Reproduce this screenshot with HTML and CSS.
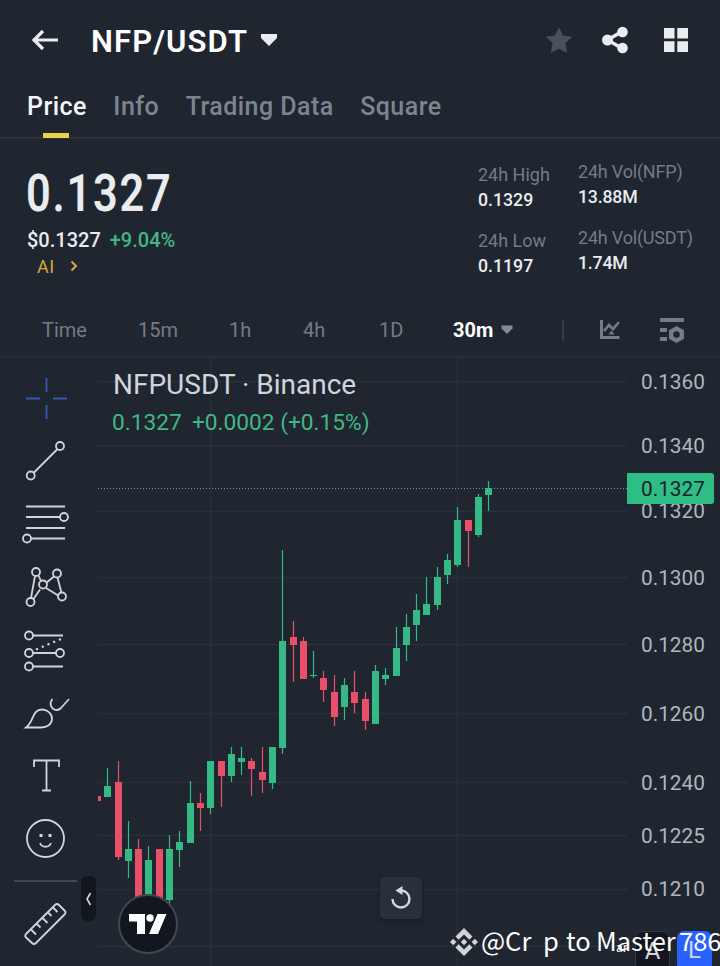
FILE: index.html
```html
<!DOCTYPE html>
<html lang="en">
<head>
<meta charset="utf-8">
<title>NFP/USDT</title>
<link rel="stylesheet" href="styles.css">
</head>
<body>
<div class="app">
  <header class="topbar">
    <svg class="back" width="28" height="22" viewBox="0 0 28 22"><path d="M27 11H3M12 2L3 11l9 9" fill="none" stroke="#eaecef" stroke-width="3.2"/></svg>
    <h1 class="pair">NFP/USDT</h1>
    <svg class="caret" width="18" height="14" viewBox="0 0 18 14"><path d="M1 1h16v4L9 13 1 5z" fill="#eaecef"/></svg>
    <div class="actions">
      <svg width="28" height="28" viewBox="0 0 28 28"><path d="M14 1l4 8.6 9.2 1.1-6.8 6.5 1.9 9.8L14 22.8 5.700 27l1.900-9.800L.8 10.700 10 9.600z" fill="#4a4f5b"/></svg>
      <svg width="28" height="28" viewBox="0 0 28 28"><path d="M21 5.500L6.500 14 21 22.300" fill="none" stroke="#eaecef" stroke-width="3.500"/><circle cx="6.500" cy="14" r="5.500" fill="#eaecef"/><circle cx="21.500" cy="6" r="5.300" fill="#eaecef"/><circle cx="21.500" cy="22" r="5.300" fill="#eaecef"/></svg>
      <svg width="26" height="26" viewBox="0 0 26 26" fill="#eaecef"><path d="M1 1h10.500v10.500H1zM14.300 1h10.700v10.500H14.300zM1 14.300h10.500V25H1zM14.300 14.300h10.700V25H14.300z"/></svg>
    </div>
  </header>

  <nav class="tabs">
    <a class="tab active">Price</a>
    <a class="tab info">Info</a>
    <a class="tab trading">Trading Data</a>
    <a class="tab square">Square</a>
  </nav>

  <section class="summary">
    <div class="quote">
      <div class="last"><span class="fit">0.1327</span></div>
      <div class="sub"><span class="fiat">$0.1327</span><span class="change">+9.04%</span></div>
      <div class="ai"><span>AI</span><svg width="8" height="12" viewBox="0 0 8 12"><path d="M1.500 1.500L6 6l-4.500 4.500" fill="none" stroke="#d9a83c" stroke-width="2"/></svg></div>
    </div>
    <dl class="stats range">
      <dt>24h High</dt><dd>0.1329</dd>
      <dt>24h Low</dt><dd>0.1197</dd>
    </dl>
    <dl class="stats volume">
      <dt>24h Vol(NFP)</dt><dd>13.88M</dd>
      <dt>24h Vol(USDT)</dt><dd>1.74M</dd>
    </dl>
  </section>

  <nav class="frames">
    <span>Time</span><span>15m</span><span>1h</span><span>4h</span><span>1D</span>
    <span class="current">30m <svg width="12" height="10" viewBox="0 0 12 10"><path d="M.5.500h11v3L6 9 .5 3.500z" fill="#848a95"/></svg></span>
    <i class="rule"></i>
    <svg width="22" height="22" viewBox="0 0 22 22" fill="none" stroke="#767d88" stroke-width="3"><path d="M2.500 1v17.500H20.500"/><path d="M5 12l5-6 4 4 6-7" stroke-width="2.600"/><path d="M9.500 15.500l3-4 3 4z" fill="#767d88" stroke="none"/></svg>
    <svg class="settings" width="28" height="28" viewBox="0 0 28 28" fill="#767d88"><path d="M2 2h24v4H2zM2 12h7v4H2zM2 21h7v4H2z"/><path fill-rule="evenodd" d="M18.500 10l7.500 4.300v8.400L18.500 27 11 22.700v-8.400zM18.500 15.200a3.300 3.300 0 1 0 0 6.600 3.300 3.300 0 1 0 0-6.600z"/></svg>
  </nav>

  <main class="chart">
    <aside class="tools">
      <svg viewBox="0 0 48 48"><path d="M24.500 4v14M24.500 31v14M4 24.500h14M31 24.500h14" stroke="#3658b5"/></svg>
      <svg viewBox="0 0 48 48"><path d="M11.500 36l24-24"/><circle cx="8.700" cy="38.500" r="4"/><circle cx="38" cy="9" r="4"/></svg>
      <svg viewBox="0 0 48 48"><path d="M4 6.500h39M4 17h34M4 28h39M9 38.500h34"/><circle cx="42" cy="17" r="4"/><circle cx="5" cy="38.500" r="4"/></svg>
      <svg viewBox="0 0 48 48"><path d="M13 13L9 35M11.500 36L18 26.500M16.500 12.500L19 18M24 20l8-6.500M35.500 14.500l4 15.500M24 25l13 8"/><circle cx="14" cy="9" r="4"/><circle cx="35" cy="10.500" r="4"/><circle cx="21" cy="21.500" r="4"/><circle cx="8.500" cy="39" r="4"/><circle cx="40" cy="33.500" r="4"/></svg>
      <svg viewBox="0 0 48 48"><path d="M11 9.500h30M11 27h23M11 40.500h30"/><path d="M14 23.500L39 13" stroke-width="2.200" stroke-dasharray="2.200 4"/><circle cx="7" cy="9.500" r="4"/><circle cx="7" cy="27" r="4"/><circle cx="38" cy="27" r="4"/><circle cx="7" cy="40.500" r="4"/></svg>
      <svg viewBox="0 0 48 48"><path d="M4 38.500c8-6 6-18 16-18 5 0 10 4 10 9 0 6-5 9-11 9z"/><path d="M30.500 10c-4 5-1 11 4.500 11 2 0 3-1 4-2l8-9"/></svg>
      <svg viewBox="0 0 48 48"><path d="M12 15V8.500h25V15M24.500 8.500v30M20 38.500h9"/></svg>
      <svg viewBox="0 0 48 48"><circle cx="23.500" cy="23.500" r="18.500"/><path d="M18 28c2 5 9 5 11 0"/><path d="M17.500 20.500h3M26.500 20.500h3" stroke-width="3"/></svg>
      <i class="divider"></i>
      <svg viewBox="0 0 48 48"><path d="M4 36L33 7q2-2 4 0l5.500 5.500q2 2 0 4L14 45q-2 2-4 0L4 39.500q-1.500-1.500 0-3.500zM9 31.500l5 5M15 26l3.500 3.500M20.500 20l5 5M26 14.500l3.500 3.500M31 9.500l4.500 4.500"/></svg>
    </aside>

    <svg class="plot" width="623" height="608" viewBox="97 358 623 608">
      <path class="grid" d="M97 381.500h530M97 446h530M97 511.500h530M97 577.500h530M97 644.500h530M97 713.500h530M97 782.500h530M97 835.500h530M97 889.500h530M97 946.500h530M210.500 358v608M457.500 358v608"/>
      <path class="last-line" d="M98 488.500h529"/>
      <path class="wick up" d="M107.500 768v29M128.500 821v57M148.500 846v50M169.500 835v68M179.500 831v36M190.500 781v62M210.500 761v53M231.500 747v35M241.500 747v28M272.500 747v42M282.500 550v204M313.500 651v27M344.500 678v42M375.500 665v59M385.500 668v17M396.500 627v49M406.500 614v47M416.500 594v47M426.500 577v38M437.500 567v43M447.500 554v30M457.500 507v60M478.500 494v43M488.500 481v30"/>
      <path class="wick down" d="M118.500 761v99M138.500 839v61M200.500 793v38M221.500 761v46M251.500 758v38M262.500 747v46M293.500 621v61M303.500 637v42M323.500 671v31M334.500 675v51M354.500 671v42M365.500 692v38M468.500 520v47"/>
      <path class="body up" d="M107.500 786v11M128.500 849v12M148.500 860v40M169.500 849v51M179.500 842v8M190.500 803v40M210.500 761v47M231.500 754v22M241.500 758v4M272.500 747v36M282.500 641v107M313.500 675v1M344.500 685v22M375.500 671v53M385.500 675v4M396.500 648v28M406.500 627v18M416.500 610v15M426.500 604v11M437.500 577v28M447.500 560v15M457.500 520v45M478.500 497v38M488.500 488v7"/>
      <path class="body down" d="M118.500 782v75M138.500 849v52M159.500 849v56M200.500 803v5M221.500 761v15M251.500 761v8M262.500 772v8M293.500 637v8M303.500 641v38M323.500 678v12M334.500 692v25M354.500 692v11M365.500 699v22M468.500 520v11"/>
      <path d="M98 796h3v5h-3z" fill="#e8506a"/>
      <g class="axis">
        <text x="641" y="389">0.1360</text><text x="641" y="453">0.1340</text><text x="641" y="518">0.1320</text>
        <text x="641" y="585">0.1300</text><text x="641" y="652">0.1280</text><text x="641" y="721">0.1260</text>
        <text x="641" y="790">0.1240</text><text x="641" y="843">0.1225</text><text x="641" y="896">0.1210</text>
      </g>
      <path d="M627 473h84q3 0 3 3v25q0 3-3 3h-84z" fill="#2ebd85"/>
      <text class="tag" x="641" y="496">0.1327</text>
      <text class="title" x="113" y="394">NFPUSDT · Binance</text>
      <text class="delta" x="112" y="430">0.1327</text>
      <text class="delta" x="192" y="430">+0.0002 (+0.15%)</text>
    </svg>

    <div class="handle"><svg width="7" height="14" viewBox="0 0 7 14"><path d="M5.500 1L2 7l3.500 6" fill="none" stroke="#d5d8df" stroke-width="1.600"/></svg></div>
    <div class="tv"><svg width="38" height="20" viewBox="0 0 38 20" fill="#fff"><path d="M0 0h16v20H8V7.500H0zM28.500 0h9L29 20h-9z"/><circle cx="21" cy="4" r="3.700"/></svg></div>
    <button class="reset"><svg width="22" height="24" viewBox="0 0 22 24"><path d="M2.500 13a8.500 8.500 0 1 0 8.500-8.500" fill="none" stroke="#d5d8df" stroke-width="2.400"/><path d="M12.500 0v9L5.500 4.500z" fill="#d5d8df"/></svg></button>
    <div class="scale auto">A</div>
    <div class="scale log">L</div>
    <div class="watermark">
      <svg width="28" height="28" viewBox="0 0 28 28" fill="#d3d4d8"><path d="M14 0l8.500 8.500-3.200 3.200L14 6.400l-5.300 5.300-3.200-3.200zM14 28l8.500-8.500-3.200-3.200L14 21.600l-5.300-5.300-3.200 3.200zM3.200 10.800L6.400 14l-3.200 3.200L0 14zM24.800 10.800L28 14l-3.200 3.200-3.200-3.200zM14 10.800l3.200 3.200-3.200 3.200-3.200-3.200z"/></svg>
      <span class="w1">@Cr</span><span class="w2">p</span><span class="w3">to</span><span class="w4">Master</span><span class="w5">786</span>
      <small>ar</small>
    </div>
  </main>
</div>
</body>
</html>
```
FILE: styles.css
```css
* { box-sizing: border-box; }
body { margin: 0; background: #1f2630; color: #eaecef; font-family: Roboto, "Liberation Sans", sans-serif; }
.app { width: 720px; height: 966px; overflow: hidden; display: flex; flex-direction: column; }
svg { display: block; flex: none; }
.fit { display: inline-block; transform-origin: left center; }

.topbar { height: 80px; padding-left: 31px; padding-right: 31px; display: flex; align-items: center; }
.pair { margin: 3px 0 0 32px; width: 169px; font-size: 31px; line-height: 36px; font-weight: 600; letter-spacing: 1.100px; color: #fff; }
.actions { margin-left: auto; display: flex; align-items: center; gap: 28px; }
.actions svg:last-child { margin-left: 6px; }

.tabs { height: 59px; padding-left: 27px; display: flex; border-bottom: 2px solid #2b323c; }
.tab { position: relative; padding-top: 11px; font-size: 25px; line-height: 31px; font-weight: 500; letter-spacing: 0.450px; color: #7d8490; margin-right: 26.500px; white-space: nowrap; }
.tab.active { color: #f5f6f8; }
.tab.active::after { content: ""; position: absolute; left: 16px; top: 53px; width: 26px; height: 5px; background: #f0d04f; }

.summary { height: 164px; display: grid; grid-template-columns: 451px 100px 1fr; padding-left: 27px; white-space: nowrap; }
.last { margin-top: 25px; height: 60px; font-size: 51px; line-height: 60px; font-weight: 600; }
.last .fit { margin-left: -1px; transform: scaleX(0.85); letter-spacing: 2px; }
.sub { height: 32px; line-height: 32px; font-size: 20px; font-weight: 500; display: flex; gap: 9px; }
.change { color: #40b884; }
.ai { display: flex; align-items: center; gap: 15px; height: 20px; padding-left: 10px; font-size: 18px; letter-spacing: 0.500px; color: #d9a83c; }
.stats { margin: 26px 0 0; }
.volume { margin-top: 23px; }
.stats dt { font-size: 18px; height: 20px; line-height: 20px; color: #747b87; }
.volume dt { letter-spacing: -0.200px; }
.stats dd { margin: 0 0 15px; font-size: 17.700px; height: 31px; line-height: 31px; font-weight: 500; }
.volume dd { letter-spacing: -0.200px; }

.frames { height: 55px; padding: 2px 0 0 42px; display: grid; grid-template-columns: 96px 91px 74px 76px 74px 109px 37px 59px 1fr; align-items: center; font-size: 20px; color: #747b87; border-bottom: 3px solid #262d37; }
.current { display: flex; align-items: center; gap: 8px; color: #fff; font-weight: 700; }
.rule { width: 2px; height: 21px; background: #353c47; }

.chart { position: relative; height: 608px; display: flex; }
.tools { width: 97px; padding: 9px 0 0 22px; display: flex; flex-direction: column; }
.tools svg { width: 48px; height: 48px; margin: 7px 0 8px; fill: none; stroke: #d1d4dc; stroke-width: 1.800; }
.divider { width: 63px; height: 2px; margin: 9px 0 9px -8px; flex: none; background: #434852; }
.grid { fill: none; stroke: #29303a; stroke-width: 1.400; }
.last-line { stroke: #6f9f92; stroke-width: 1; stroke-dasharray: 1 2; }
.wick { fill: none; stroke-width: 1.200; }
.body { fill: none; stroke-width: 7; }
.up { stroke: #35b985; }
.down { stroke: #e8506a; }
.axis { font-size: 20.800px; fill: #b2b5be; }
.tag { font-size: 20.800px; fill: #17212a; }
.title { font-size: 28px; fill: #d1d4dc; }
.delta { font-size: 22.700px; fill: #40b884; }

.handle { position: absolute; left: 81px; top: 518px; width: 15px; height: 45px; border-radius: 6px; background: #11161f; display: grid; place-items: center; }
.tv { position: absolute; left: 118px; top: 536px; width: 60px; height: 60px; border-radius: 50%; border: 2px solid #434750; background: #11161f; display: grid; place-items: center; }
.reset { position: absolute; left: 380px; top: 519px; width: 42px; height: 42px; padding: 0; border: 0; border-radius: 5px; background: #2a303a; box-shadow: 0 2px 4px #171d25; display: grid; place-items: center; }
.scale { position: absolute; top: 573px; width: 35px; height: 40px; border-radius: 7px; font-size: 24px; line-height: 38px; text-align: center; color: #d1d4dc; }
.auto { left: 635px; background: #11161f; border: 1px solid #343a44; }
.log { left: 677px; background: #2962ff; }
.watermark { position: absolute; left: 450px; top: 563px; height: 36px; width: 270px; display: flex; align-items: center; font-family: "Noto Sans CJK SC", "Noto Sans", sans-serif; font-size: 25.500px; color: #fff; white-space: nowrap; }
.watermark svg { position: relative; top: 3px; }
.watermark span { flex: none; }
.w1 { margin-left: 3px; width: 62px; }
.w2 { width: 23px; }
.w3 { width: 30px; }
.w4 { width: 83px; }
.watermark small { position: absolute; left: 166px; top: 17px; font-size: 12px; }
```
